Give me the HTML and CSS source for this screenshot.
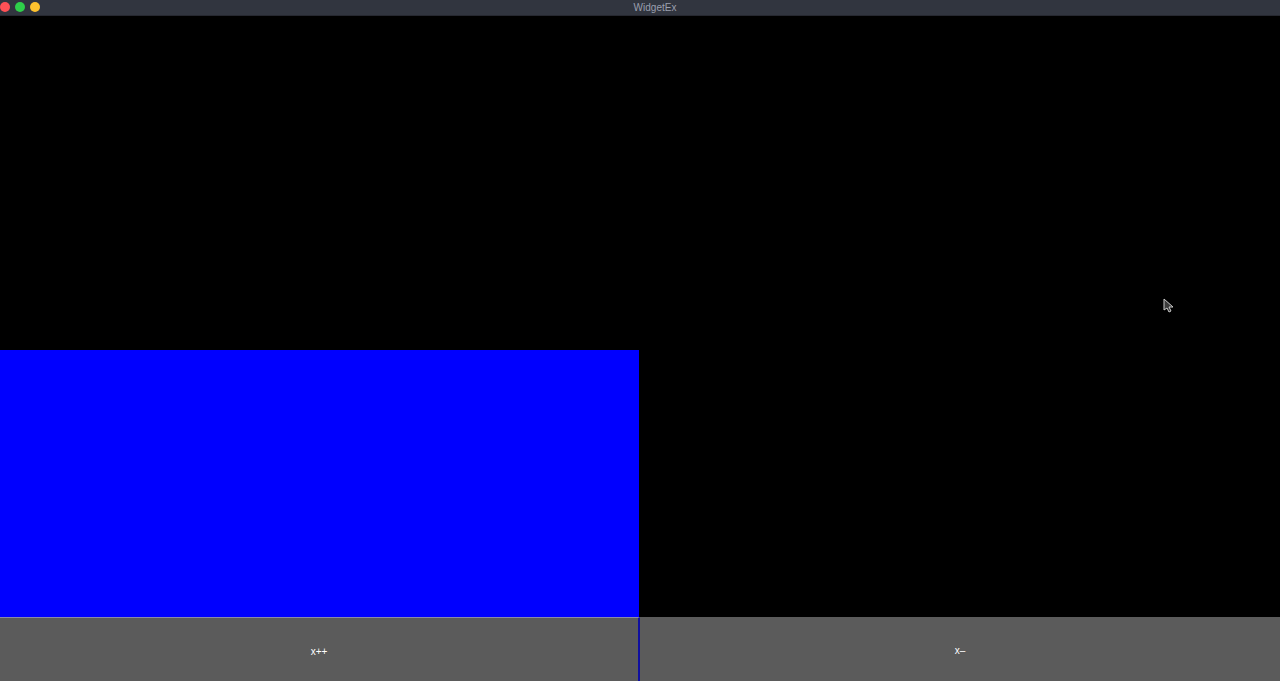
FILE: index.html
```html
<!DOCTYPE html>
<html>
<head>
<meta charset="utf-8">
<title>WidgetEx</title>
<link rel="stylesheet" href="styles.css">
</head>
<body>
<div class="window">
  <div class="titlebar">
    <div class="lights">
      <span class="light red"></span>
      <span class="light green"></span>
      <span class="light yellow"></span>
    </div>
    <div class="title">WidgetEx</div>
  </div>
  <div class="canvas">
    <div class="row-top"></div>
    <div class="row-bottom">
      <div class="bar"></div>
      <div class="empty"></div>
    </div>
    <svg class="cursor" width="12" height="16" viewBox="0 0 12 16">
      <path d="M1 1 L1 12 L4 10 L6 14 L8 13 L6 9 L10 9 Z" fill="#3a3a3a" stroke="#c8c8c8" stroke-width="1"/>
    </svg>
  </div>
  <div class="buttons">
    <div class="btn btn-left">x++</div>
    <div class="btn btn-right">x–</div>
  </div>
</div>
</body>
</html>
```
FILE: styles.css
```css
html, body {
  margin: 0;
  padding: 0;
  background: #000;
}
.window {
  width: 1280px;
  height: 681px;
  display: flex;
  flex-direction: column;
  font-family: "Liberation Sans", "DejaVu Sans", sans-serif;
}
.titlebar {
  height: 15px;
  flex: 0 0 15px;
  background: #31353f;
  border-bottom: 1px solid #262830;
  display: flex;
  align-items: center;
  justify-content: center;
  position: relative;
}
.lights {
  position: absolute;
  left: 0;
  top: 2px;
  display: flex;
  gap: 5px;
}
.light {
  width: 10px;
  height: 10px;
  border-radius: 50%;
  display: block;
}
.red { background: #fe5156; }
.green { background: #2ed04a; }
.yellow { background: #fdc12e; }
.title {
  color: #9a9fae;
  font-size: 10px;
  line-height: 15px;
  padding-left: 30px;
}
.canvas {
  flex: 0 0 601px;
  display: flex;
  flex-direction: column;
  background: #000;
  position: relative;
}
.row-top {
  flex: 0 0 334px;
}
.row-bottom {
  flex: 1;
  display: flex;
}
.bar {
  width: 639px;
  background: #0000ff;
}
.empty {
  flex: 1;
}
.cursor {
  position: absolute;
  left: 1163px;
  top: 282px;
}
.buttons {
  flex: 0 0 64px;
  display: flex;
  background: #5b5b5b;
}
.btn {
  display: flex;
  align-items: center;
  justify-content: center;
  color: #fff;
  font-size: 10px;
  background: #5b5b5b;
  box-sizing: border-box;
}
.btn-left {
  width: 640px;
  border-top: 1px solid #8a8aa8;
  border-right: 2px solid #1010a0;
  padding-top: 3px;
}
.btn-right {
  flex: 1;
  padding-top: 3px;
}
```
